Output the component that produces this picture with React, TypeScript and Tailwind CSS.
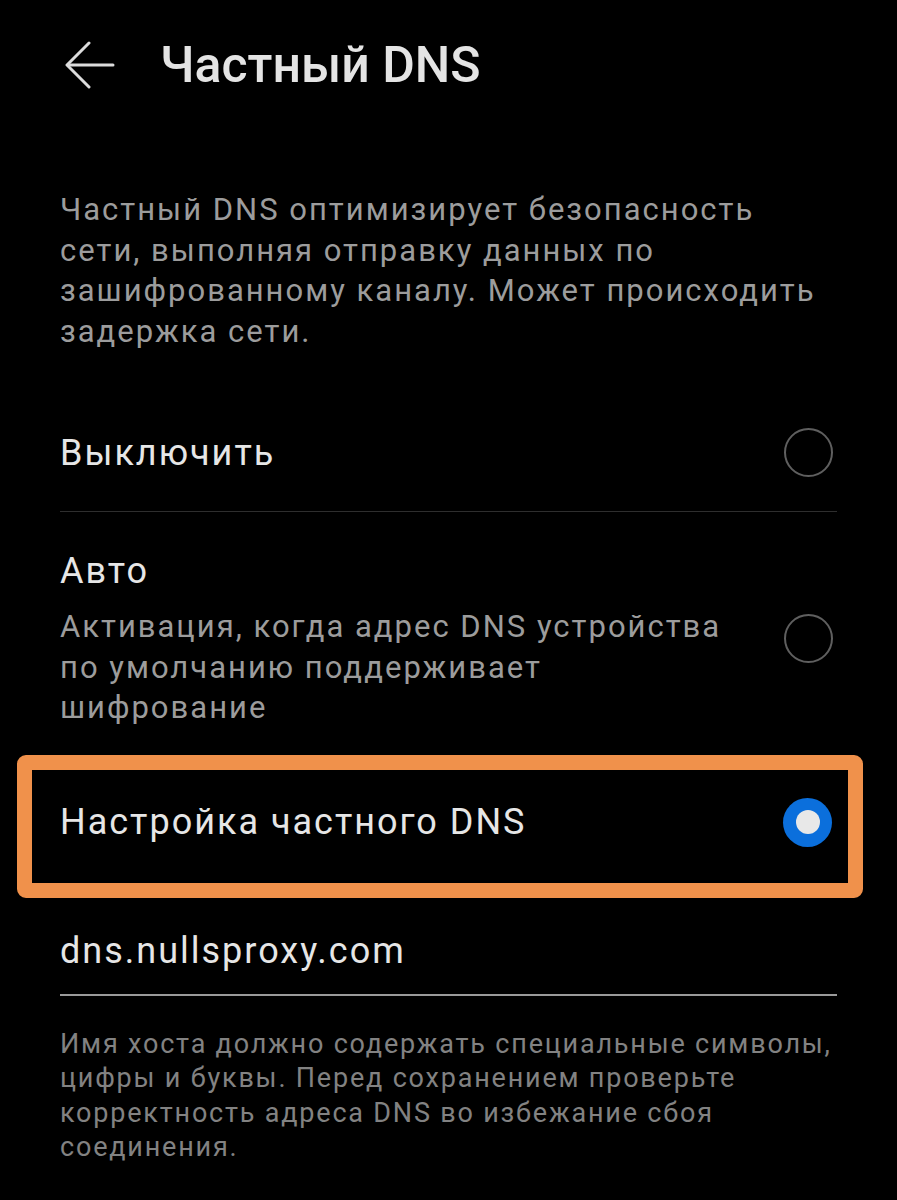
import React from "react";

function Radio({ checked = false }: { checked?: boolean }) {
  if (checked) {
    return (
      <div className="flex h-[49px] w-[49px] shrink-0 items-center justify-center rounded-full bg-[#0b6fdc]">
        <div className="h-[24px] w-[24px] rounded-full bg-[#e8e8e8]" />
      </div>
    );
  }
  return <div className="h-[49px] w-[49px] shrink-0 rounded-full border-2 border-[#5f5f5f]" />;
}

export default function App() {
  return (
    <div className="h-[1200px] w-[897px] overflow-hidden bg-black font-['Roboto',sans-serif]">
      {/* header */}
      <div className="flex h-[130px] items-center pl-[65px]">
        <svg width="50" height="50" viewBox="0 0 50 50" fill="none" stroke="#dcdcdc" strokeWidth="3" strokeLinecap="round" strokeLinejoin="round">
          <path d="M48 25H3" />
          <path d="M24 3L2 25l22 22" />
        </svg>
        <h1 className="ml-[45px] text-[50px] font-medium leading-none text-[#e4e4e4]">Частный DNS</h1>
      </div>

      <p className="mt-[60px] whitespace-nowrap px-[60px] text-[31px] leading-[40.5px] tracking-[2px] text-[#9c9c9c]">
        Частный DNS оптимизирует безопасность
        <br />
        сети, выполняя отправку данных по
        <br />
        зашифрованному каналу. Может происходить
        <br />
        задержка сети.
      </p>

      <div className="mx-[60px] mt-[42px]">
        <div className="flex h-[118px] items-center justify-between border-b border-[#2e2e2e] pr-[4px]">
          <span className="text-[36px] tracking-[2px] text-[#e6e6e6]">Выключить</span>
          <Radio />
        </div>

        <div className="flex items-center justify-between pt-[37px] pr-[4px]">
          <div className="whitespace-nowrap tracking-[2px]">
            <div className="text-[36px] leading-[44px] text-[#e6e6e6]">Авто</div>
            <div className="mt-[14px] text-[31px] leading-[40.5px] text-[#9c9c9c]">
              Активация, когда адрес DNS устройства
              <br />
              по умолчанию поддерживает
              <br />
              шифрование
            </div>
          </div>
          <Radio />
        </div>
      </div>

      <div className="ml-[17px] mr-[34px] mt-[26px] rounded-[9px] border-[15px] border-[#f0914b]">
        <div className="flex h-[113px] items-center justify-between rounded-[2px] bg-black pb-[8px] pl-[28px] pr-[16px]">
          <span className="text-[36px] tracking-[2px] text-[#e6e6e6]">Настройка частного DNS</span>
          <Radio checked />
        </div>
      </div>

      <div className="mx-[60px] mt-[31px]">
        <div className="border-b-2 border-[#9a9a9a] pb-[21px] text-[36px] leading-[44px] tracking-[2px] text-[#e6e6e6]">dns.nullsproxy.com</div>
        <p className="mt-[31px] whitespace-nowrap text-[27px] leading-[34.5px] tracking-[1.8px] text-[#828282]">
          Имя хоста должно содержать специальные символы,
          <br />
          цифры и буквы. Перед сохранением проверьте
          <br />
          корректность адреса DNS во избежание сбоя
          <br />
          соединения.
        </p>
      </div>
    </div>
  );
}
